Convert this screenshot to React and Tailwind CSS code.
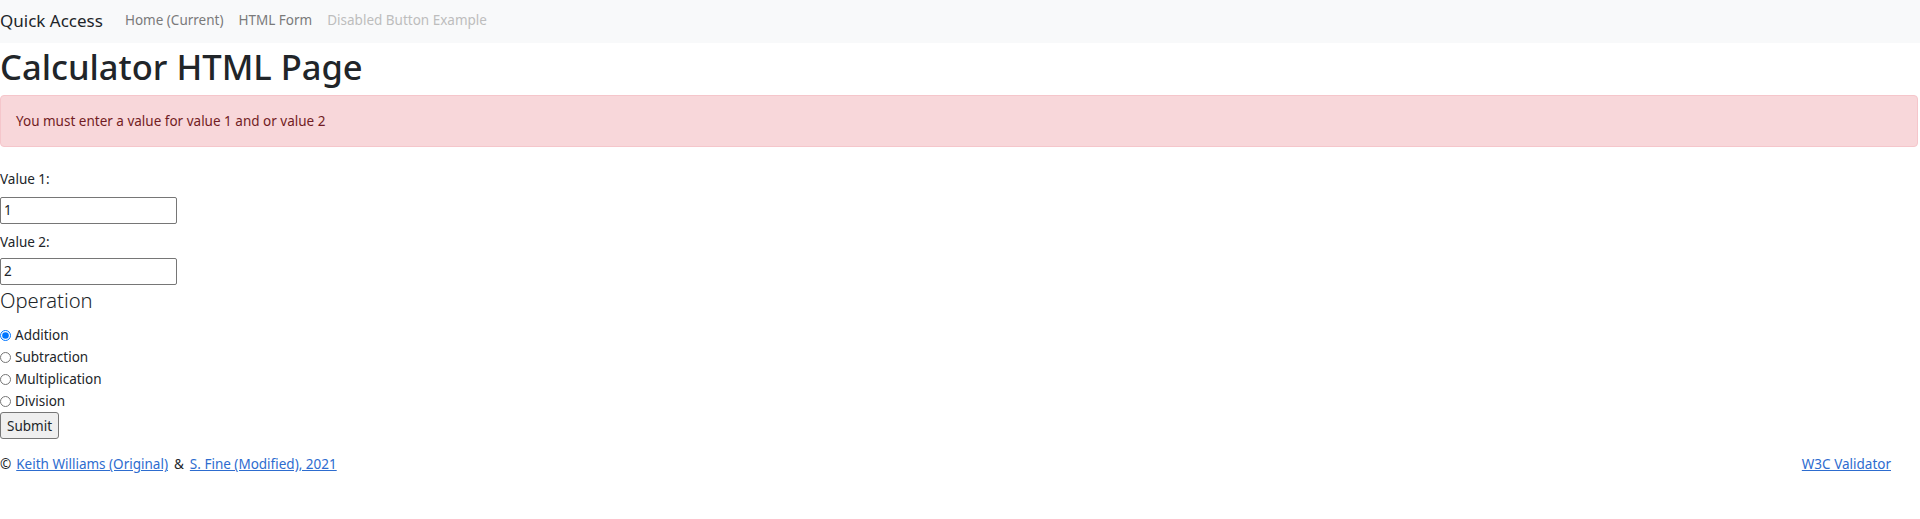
import { useState } from "react";

const operations = ["Addition", "Subtraction", "Multiplication", "Division"];

const App = () => {
  const [value1, setValue1] = useState("1");
  const [value2, setValue2] = useState("2");
  const [op, setOp] = useState("Addition");

  return (
    <div className="w-[1920px] h-[519px] bg-white text-[#212529] font-['Noto_Sans',sans-serif] text-[13.5px] leading-[1.5]">
      {/* navbar */}
      <nav className="h-[43px] pb-[2px] bg-[#f8f9fa] flex items-center">
        <span className="text-[17px] text-[#212529] mr-[22px]">Quick Access</span>
        <div className="flex gap-[15px] text-[13.5px]">
          <a className="text-[#7a7a7a]">Home (Current)</a>
          <a className="text-[#7a7a7a]">HTML Form</a>
          <span className="text-[#bdbdbd]">Disabled Button Example</span>
        </div>
      </nav>

      <h1 className="text-[34.5px] font-medium leading-[1.2] mt-[3px] mb-[8px]">Calculator HTML Page</h1>

      {/* error */}
      <div className="mr-[2px] h-[52px] flex items-center px-[15px] bg-[#f8d7da] border border-[#f5c6cb] rounded-[4px] text-[#721c24]">
        You must enter a value for value 1 and or value 2
      </div>

      <form className="mt-[22px]" onSubmit={(e) => e.preventDefault()}>
        <label className="block">Value 1:</label>
        <input
          value={value1}
          onChange={(e) => setValue1(e.target.value)}
          className="block mt-[7px] w-[177px] h-[27px] border border-[#767676] rounded-[2px] px-[3px] text-[13.5px]"
        />
        <label className="block mt-[8px]">Value 2:</label>
        <input
          value={value2}
          onChange={(e) => setValue2(e.target.value)}
          className="block mt-[6px] w-[177px] h-[27px] border border-[#767676] rounded-[2px] px-[3px] text-[13.5px]"
        />
        <fieldset className="mt-[3px]">
          <legend className="text-[20.2px] font-light leading-[1.2]">Operation</legend>
          <div className="mt-[12px] flex flex-col">
            {operations.map((o) => (
              <label key={o} className="flex items-center h-[22px]">
                <input
                  type="radio"
                  name="op"
                  checked={op === o}
                  onChange={() => setOp(o)}
                  className="w-[11px] h-[11px] m-0 mr-[4px] accent-[#0075ff]"
                />
                {o}
              </label>
            ))}
          </div>
        </fieldset>
        <button className="h-[27px] px-[6px] bg-[#efefef] border border-[#767676] rounded-[3px] text-[13.5px]">
          Submit
        </button>
      </form>

      <footer className="mt-[15px] flex justify-between pr-[29px]">
        <span>
          ©<span className="ml-[5px]" />
          <a className="text-[#2d6ccf] underline">Keith Williams (Original)</a>
          <span className="mx-[6px]">&amp;</span>
          <a className="text-[#2d6ccf] underline">S. Fine (Modified), 2021</a>
        </span>
        <a className="text-[#2d6ccf] underline">W3C Validator</a>
      </footer>
    </div>
  );
};

export default App;
